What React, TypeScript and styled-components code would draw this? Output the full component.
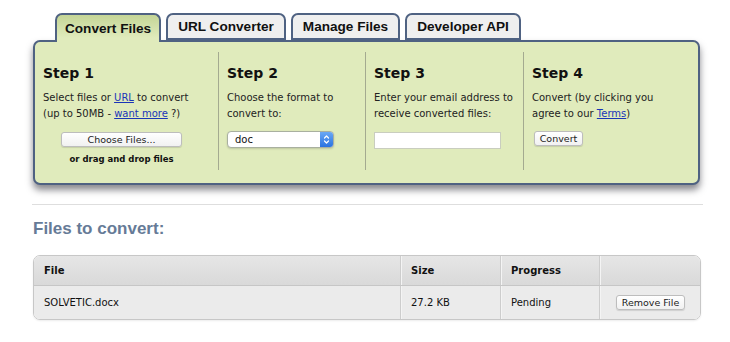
import React from "react";
import styled, { createGlobalStyle } from "styled-components";

const GlobalStyle = createGlobalStyle`
  body {
    margin: 0;
    background: #ffffff;
    font-family: "DejaVu Sans", Verdana, sans-serif;
    color: #111;
  }
`;

const Page = styled.div`
  width: 730px;
  height: 342px;
  padding: 13px 0 0 33px;
  box-sizing: border-box;
  overflow: hidden;
`;

const TabBar = styled.div`
  display: flex;
  gap: 5px;
  padding-left: 22px;
  height: 27px;
  position: relative;
  z-index: 2;
`;

const Tab = styled.div<{ $active?: boolean }>`
  display: flex;
  align-items: center;
  padding: 0 ${(p) => (p.$active ? "8px" : "10px")};
  height: ${(p) => (p.$active ? "29px" : "27px")};
  box-sizing: border-box;
  border: 2px solid #4f6282;
  border-bottom: ${(p) => (p.$active ? "none" : "2px solid #4f6282")};
  border-radius: 7px 7px 0 0;
  background: ${(p) =>
    p.$active ? "linear-gradient(#c4d596, #e0ebbc 85%)" : "#efefef"};
  font-family: "Liberation Sans", Arial, sans-serif;
  font-weight: bold;
  font-size: 13.6px;
  color: #111;
`;

const Panel = styled.div`
  width: 667px;
  height: 145px;
  box-sizing: border-box;
  border: 2px solid #4f6282;
  border-radius: 7px;
  background: #e0ebbc;
  box-shadow: 0 5px 7px rgba(40, 40, 50, 0.55);
  display: flex;
  padding: 10px 0 13px;
`;

const Column = styled.div<{ $w: number; $first?: boolean }>`
  width: ${(p) => p.$w}px;
  box-sizing: border-box;
  padding: 13px 8px 0;
  border-left: ${(p) => (p.$first ? "none" : "1px solid #a4aa90")};
  display: flex;
  flex-direction: column;
  align-items: flex-start;
`;

const StepTitle = styled.h2`
  margin: 0 0 8px;
  font-size: 14px;
  line-height: 17px;
  font-weight: bold;
`;

const StepText = styled.p`
  margin: 0 0 9px;
  font-size: 10px;
  line-height: 16px;
  color: #222;

  a {
    color: #1a35b8;
    text-decoration: underline;
  }
`;

const MacButton = styled.button<{ $w: number }>`
  width: ${(p) => p.$w}px;
  height: 15px;
  padding: 0;
  border: 1px solid #bdbdbd;
  border-radius: 3px;
  background: linear-gradient(#ffffff, #f1f1f1);
  box-shadow: 0 1px 1px rgba(0, 0, 0, 0.12);
  font-family: "DejaVu Sans", Verdana, sans-serif;
  font-size: 9.5px;
  line-height: 13px;
  color: #222;
`;

const UploadBox = styled.div`
  align-self: stretch;
  display: flex;
  flex-direction: column;
  align-items: center;
  padding-right: 10px;
  margin-top: 1px;
`;

const DropHint = styled.div`
  margin-top: 6px;
  font-size: 8.5px;
  font-weight: bold;
  line-height: 12px;
`;

const Select = styled.div`
  width: 107px;
  height: 17px;
  box-sizing: border-box;
  display: flex;
  align-items: center;
  border: 1px solid #a9b0a0;
  border-radius: 4px;
  background: #fff;
  box-shadow: 0 1px 2px rgba(0, 0, 0, 0.15);
  font-size: 10px;
  padding-left: 7px;
  overflow: hidden;
`;

const SelectValue = styled.span`
  flex: 1;
`;

const Stepper = styled.span`
  width: 13px;
  height: 100%;
  display: flex;
  align-items: center;
  justify-content: center;
  background: linear-gradient(#6aa8f5, #2a73e0);
`;

const EmailInput = styled.input`
  width: 127px;
  height: 17px;
  box-sizing: border-box;
  border: 1px solid #c9cdbf;
  background: #fff;
  margin-top: 1px;
  padding: 0 4px;
`;

const Divider = styled.hr`
  width: 671px;
  margin: 19px 0 0 -1px;
  border: none;
  border-top: 1px solid #dedede;
`;

const SectionTitle = styled.h3`
  margin: 14px 0 16px;
  font-family: "Liberation Sans", Arial, sans-serif;
  font-size: 17px;
  line-height: 20px;
  font-weight: bold;
  color: #667b97;
`;

const Table = styled.div`
  width: 668px;
  box-sizing: border-box;
  border: 1px solid #c7c7c7;
  border-radius: 7px;
  overflow: hidden;
  box-shadow: 0 1px 2px rgba(0, 0, 0, 0.08);
`;

const Row = styled.div<{ $head?: boolean }>`
  display: grid;
  grid-template-columns: 366px 100px 99px 1fr;
  height: ${(p) => (p.$head ? "29px" : "33px")};
  background: ${(p) =>
    p.$head ? "linear-gradient(#e6e6e6, #d9d9d9)" : "#ebebeb"};
  border-bottom: ${(p) => (p.$head ? "1px solid #c6c6c6" : "none")};
  font-weight: ${(p) => (p.$head ? "bold" : "normal")};
  font-size: 10px;
`;

const Cell = styled.div<{ $right?: boolean }>`
  display: flex;
  align-items: center;
  justify-content: ${(p) => (p.$right ? "flex-end" : "flex-start")};
  padding: 0 ${(p) => (p.$right ? "15px" : "10px")} 0 10px;
  border-left: 1px solid #cdcdcd;
  box-shadow: inset 1px 0 0 #f4f4f4;

  &:first-child {
    border-left: none;
    box-shadow: none;
  }
`;

const Chevrons = () => (
  <svg width="7" height="11" viewBox="0 0 7 11">
    <path
      d="M1.5 4 L3.5 2 L5.5 4 M1.5 7 L3.5 9 L5.5 7"
      fill="none"
      stroke="#fff"
      strokeWidth="1.2"
      strokeLinecap="round"
      strokeLinejoin="round"
    />
  </svg>
);

const tabs = ["Convert Files", "URL Converter", "Manage Files", "Developer API"];

const files = [{ name: "SOLVETIC.docx", size: "27.2 KB", progress: "Pending" }];

export default function App() {
  return (
    <Page>
      <GlobalStyle />
      <TabBar>
        {tabs.map((t, i) => (
          <Tab key={t} $active={i === 0}>
            {t}
          </Tab>
        ))}
      </TabBar>
      <Panel>
        <Column $w={183} $first>
          <StepTitle>Step 1</StepTitle>
          <StepText>
            Select files or <a href="#">URL</a> to convert
            <br />
            (up to 50MB - <a href="#">want more</a> ?)
          </StepText>
          <UploadBox>
            <MacButton $w={121}>Choose Files...</MacButton>
            <DropHint>or drag and drop files</DropHint>
          </UploadBox>
        </Column>
        <Column $w={147}>
          <StepTitle>Step 2</StepTitle>
          <StepText>
            Choose the format to
            <br />
            convert to:
          </StepText>
          <Select>
            <SelectValue>doc</SelectValue>
            <Stepper>
              <Chevrons />
            </Stepper>
          </Select>
        </Column>
        <Column $w={158}>
          <StepTitle>Step 3</StepTitle>
          <StepText>
            Enter your email address to
            <br />
            receive converted files:
          </StepText>
          <EmailInput type="text" />
        </Column>
        <Column $w={175}>
          <StepTitle>Step 4</StepTitle>
          <StepText>
            Convert (by clicking you
            <br />
            agree to our <a href="#">Terms</a>)
          </StepText>
          <MacButton $w={49} style={{ marginLeft: 2 }}>
            Convert
          </MacButton>
        </Column>
      </Panel>
      <Divider />
      <SectionTitle>Files to convert:</SectionTitle>
      <Table>
        <Row $head>
          <Cell>File</Cell>
          <Cell>Size</Cell>
          <Cell>Progress</Cell>
          <Cell />
        </Row>
        {files.map((f) => (
          <Row key={f.name}>
            <Cell>{f.name}</Cell>
            <Cell>{f.size}</Cell>
            <Cell>{f.progress}</Cell>
            <Cell $right>
              <MacButton $w={69}>Remove File</MacButton>
            </Cell>
          </Row>
        ))}
      </Table>
    </Page>
  );
}
